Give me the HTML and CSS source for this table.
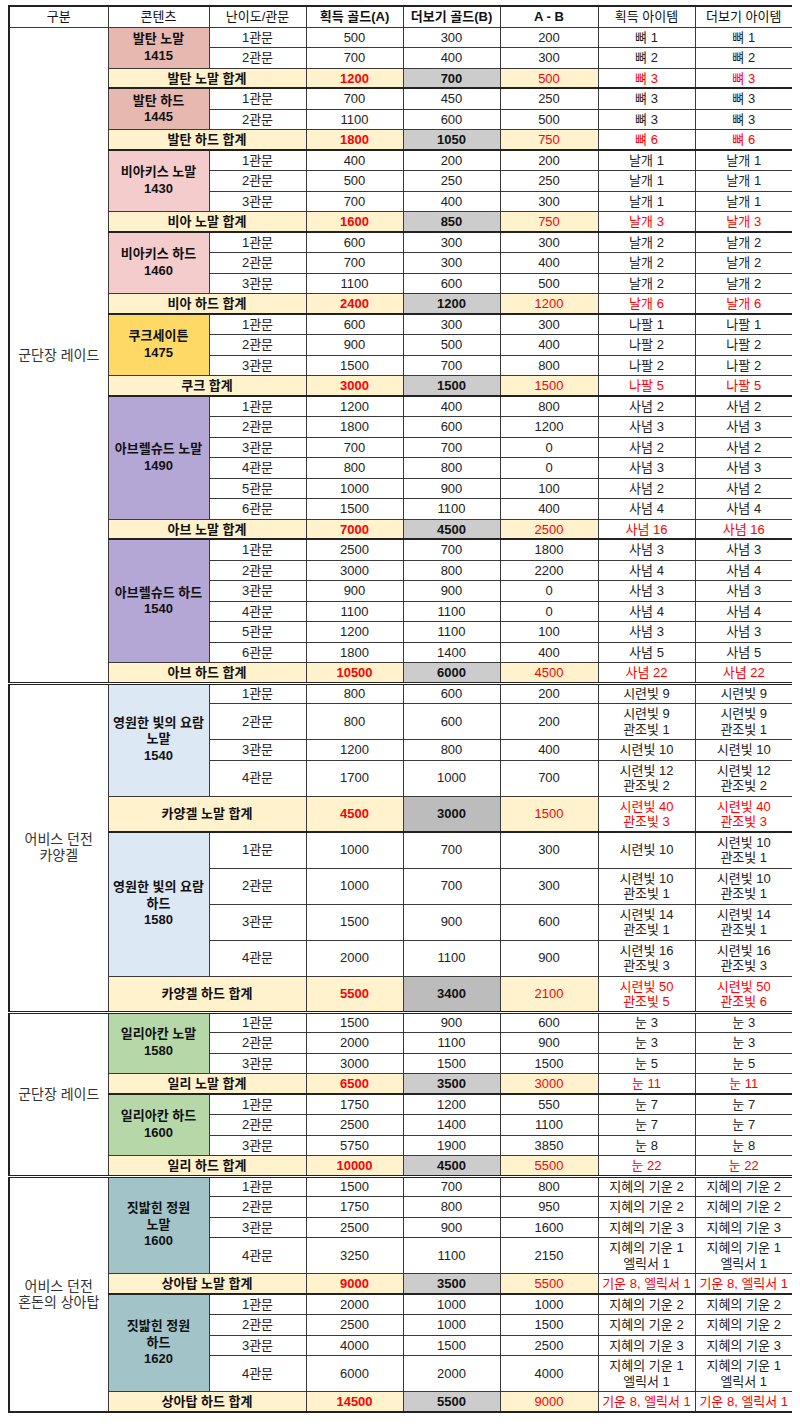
FILE: index.html
```html
<!DOCTYPE html>
<html lang="ko">
<head>
<meta charset="utf-8">
<title>골드 표</title>
<link rel="stylesheet" href="styles.css">
</head>
<body>
<table class="sheet">
<colgroup>
<col class="w99"><col class="w101"><col class="w97"><col class="w97"><col class="w97"><col class="w98"><col class="w97"><col class="w98">
</colgroup>
<thead>
<tr>
<th>구분</th><th>콘텐츠</th><th>난이도/관문</th><th class="b">획득 골드(A)</th><th class="b">더보기 골드(B)</th><th class="b">A - B</th><th>획득 아이템</th><th>더보기 아이템</th>
</tr>
</thead>
<tbody>
<!-- 군단장 레이드 -->
<tr>
<td class="cat" rowspan="32">군단장 레이드</td>
<td class="name valtan" rowspan="2">발탄 노말<br>1415</td>
<td>1관문</td><td>500</td><td>300</td><td>200</td><td>뼈 1</td><td>뼈 1</td></tr>
<tr><td>2관문</td><td>700</td><td>400</td><td>300</td><td>뼈 2</td><td>뼈 2</td></tr>
<tr class="sum"><td class="sum-label" colspan="2">발탄 노말 합계</td><td class="sa">1200</td><td class="sb">700</td><td class="sab">500</td><td class="si">뼈 3</td><td class="si">뼈 3</td></tr>

<tr><td class="name valtan" rowspan="2">발탄 하드<br>1445</td>
<td>1관문</td><td>700</td><td>450</td><td>250</td><td>뼈 3</td><td>뼈 3</td></tr>
<tr><td>2관문</td><td>1100</td><td>600</td><td>500</td><td>뼈 3</td><td>뼈 3</td></tr>
<tr class="sum"><td class="sum-label" colspan="2">발탄 하드 합계</td><td class="sa">1800</td><td class="sb">1050</td><td class="sab">750</td><td class="si">뼈 6</td><td class="si">뼈 6</td></tr>

<tr><td class="name biackiss" rowspan="3">비아키스 노말<br>1430</td>
<td>1관문</td><td>400</td><td>200</td><td>200</td><td>날개 1</td><td>날개 1</td></tr>
<tr><td>2관문</td><td>500</td><td>250</td><td>250</td><td>날개 1</td><td>날개 1</td></tr>
<tr><td>3관문</td><td>700</td><td>400</td><td>300</td><td>날개 1</td><td>날개 1</td></tr>
<tr class="sum"><td class="sum-label" colspan="2">비아 노말 합계</td><td class="sa">1600</td><td class="sb">850</td><td class="sab">750</td><td class="si">날개 3</td><td class="si">날개 3</td></tr>

<tr><td class="name biackiss" rowspan="3">비아키스 하드<br>1460</td>
<td>1관문</td><td>600</td><td>300</td><td>300</td><td>날개 2</td><td>날개 2</td></tr>
<tr><td>2관문</td><td>700</td><td>300</td><td>400</td><td>날개 2</td><td>날개 2</td></tr>
<tr><td>3관문</td><td>1100</td><td>600</td><td>500</td><td>날개 2</td><td>날개 2</td></tr>
<tr class="sum"><td class="sum-label" colspan="2">비아 하드 합계</td><td class="sa">2400</td><td class="sb">1200</td><td class="sab">1200</td><td class="si">날개 6</td><td class="si">날개 6</td></tr>

<tr><td class="name kouku" rowspan="3">쿠크세이튼<br>1475</td>
<td>1관문</td><td>600</td><td>300</td><td>300</td><td>나팔 1</td><td>나팔 1</td></tr>
<tr><td>2관문</td><td>900</td><td>500</td><td>400</td><td>나팔 2</td><td>나팔 2</td></tr>
<tr><td>3관문</td><td>1500</td><td>700</td><td>800</td><td>나팔 2</td><td>나팔 2</td></tr>
<tr class="sum"><td class="sum-label" colspan="2">쿠크 합계</td><td class="sa">3000</td><td class="sb">1500</td><td class="sab">1500</td><td class="si">나팔 5</td><td class="si">나팔 5</td></tr>

<tr><td class="name abrel" rowspan="6">아브렐슈드 노말<br>1490</td>
<td>1관문</td><td>1200</td><td>400</td><td>800</td><td>사념 2</td><td>사념 2</td></tr>
<tr><td>2관문</td><td>1800</td><td>600</td><td>1200</td><td>사념 3</td><td>사념 3</td></tr>
<tr><td>3관문</td><td>700</td><td>700</td><td>0</td><td>사념 2</td><td>사념 2</td></tr>
<tr><td>4관문</td><td>800</td><td>800</td><td>0</td><td>사념 3</td><td>사념 3</td></tr>
<tr><td>5관문</td><td>1000</td><td>900</td><td>100</td><td>사념 2</td><td>사념 2</td></tr>
<tr><td>6관문</td><td>1500</td><td>1100</td><td>400</td><td>사념 4</td><td>사념 4</td></tr>
<tr class="sum"><td class="sum-label" colspan="2">아브 노말 합계</td><td class="sa">7000</td><td class="sb">4500</td><td class="sab">2500</td><td class="si">사념 16</td><td class="si">사념 16</td></tr>

<tr><td class="name abrel" rowspan="6">아브렐슈드 하드<br>1540</td>
<td>1관문</td><td>2500</td><td>700</td><td>1800</td><td>사념 3</td><td>사념 3</td></tr>
<tr><td>2관문</td><td>3000</td><td>800</td><td>2200</td><td>사념 4</td><td>사념 4</td></tr>
<tr><td>3관문</td><td>900</td><td>900</td><td>0</td><td>사념 3</td><td>사념 3</td></tr>
<tr><td>4관문</td><td>1100</td><td>1100</td><td>0</td><td>사념 4</td><td>사념 4</td></tr>
<tr><td>5관문</td><td>1200</td><td>1100</td><td>100</td><td>사념 3</td><td>사념 3</td></tr>
<tr><td>6관문</td><td>1800</td><td>1400</td><td>400</td><td>사념 5</td><td>사념 5</td></tr>
<tr class="sum"><td class="sum-label" colspan="2">아브 하드 합계</td><td class="sa">10500</td><td class="sb">6000</td><td class="sab">4500</td><td class="si">사념 22</td><td class="si">사념 22</td></tr>

<!-- 어비스 던전 카양겔 -->
<tr class="sec">
<td class="cat" rowspan="10">어비스 던전<br>카양겔</td>
<td class="name kayangel" rowspan="4">영원한 빛의 요람<br>노말<br>1540</td>
<td>1관문</td><td>800</td><td>600</td><td>200</td><td>시련빛 9</td><td>시련빛 9</td></tr>
<tr><td>2관문</td><td>800</td><td>600</td><td>200</td><td>시련빛 9<br>관조빛 1</td><td>시련빛 9<br>관조빛 1</td></tr>
<tr><td>3관문</td><td>1200</td><td>800</td><td>400</td><td>시련빛 10</td><td>시련빛 10</td></tr>
<tr><td>4관문</td><td>1700</td><td>1000</td><td>700</td><td>시련빛 12<br>관조빛 2</td><td>시련빛 12<br>관조빛 2</td></tr>
<tr class="sum"><td class="sum-label" colspan="2">카양겔 노말 합계</td><td class="sa">4500</td><td class="sb dark">3000</td><td class="sab">1500</td><td class="si">시련빛 40<br>관조빛 3</td><td class="si">시련빛 40<br>관조빛 3</td></tr>

<tr><td class="name kayangel" rowspan="4">영원한 빛의 요람<br>하드<br>1580</td>
<td>1관문</td><td>1000</td><td>700</td><td>300</td><td>시련빛 10</td><td>시련빛 10<br>관조빛 1</td></tr>
<tr><td>2관문</td><td>1000</td><td>700</td><td>300</td><td>시련빛 10<br>관조빛 1</td><td>시련빛 10<br>관조빛 1</td></tr>
<tr><td>3관문</td><td>1500</td><td>900</td><td>600</td><td>시련빛 14<br>관조빛 1</td><td>시련빛 14<br>관조빛 1</td></tr>
<tr><td>4관문</td><td>2000</td><td>1100</td><td>900</td><td>시련빛 16<br>관조빛 3</td><td>시련빛 16<br>관조빛 3</td></tr>
<tr class="sum"><td class="sum-label" colspan="2">카양겔 하드 합계</td><td class="sa">5500</td><td class="sb dark">3400</td><td class="sab">2100</td><td class="si">시련빛 50<br>관조빛 5</td><td class="si">시련빛 50<br>관조빛 6</td></tr>

<!-- 군단장 레이드 (일리아칸) -->
<tr class="sec">
<td class="cat" rowspan="8">군단장 레이드</td>
<td class="name illiakan" rowspan="3">일리아칸 노말<br>1580</td>
<td>1관문</td><td>1500</td><td>900</td><td>600</td><td>눈 3</td><td>눈 3</td></tr>
<tr><td>2관문</td><td>2000</td><td>1100</td><td>900</td><td>눈 3</td><td>눈 3</td></tr>
<tr><td>3관문</td><td>3000</td><td>1500</td><td>1500</td><td>눈 5</td><td>눈 5</td></tr>
<tr class="sum"><td class="sum-label" colspan="2">일리 노말 합계</td><td class="sa">6500</td><td class="sb">3500</td><td class="sab">3000</td><td class="si">눈 11</td><td class="si">눈 11</td></tr>

<tr><td class="name illiakan" rowspan="3">일리아칸 하드<br>1600</td>
<td>1관문</td><td>1750</td><td>1200</td><td>550</td><td>눈 7</td><td>눈 7</td></tr>
<tr><td>2관문</td><td>2500</td><td>1400</td><td>1100</td><td>눈 7</td><td>눈 7</td></tr>
<tr><td>3관문</td><td>5750</td><td>1900</td><td>3850</td><td>눈 8</td><td>눈 8</td></tr>
<tr class="sum"><td class="sum-label" colspan="2">일리 하드 합계</td><td class="sa">10000</td><td class="sb">4500</td><td class="sab">5500</td><td class="si">눈 22</td><td class="si">눈 22</td></tr>

<!-- 어비스 던전 혼돈의 상아탑 -->
<tr class="sec">
<td class="cat" rowspan="10">어비스 던전<br>혼돈의 상아탑</td>
<td class="name ivory" rowspan="4">짓밟힌 정원<br>노말<br>1600</td>
<td>1관문</td><td>1500</td><td>700</td><td>800</td><td>지혜의 기운 2</td><td>지혜의 기운 2</td></tr>
<tr><td>2관문</td><td>1750</td><td>800</td><td>950</td><td>지혜의 기운 2</td><td>지혜의 기운 2</td></tr>
<tr><td>3관문</td><td>2500</td><td>900</td><td>1600</td><td>지혜의 기운 3</td><td>지혜의 기운 3</td></tr>
<tr><td>4관문</td><td>3250</td><td>1100</td><td>2150</td><td>지혜의 기운 1<br>엘릭서 1</td><td>지혜의 기운 1<br>엘릭서 1</td></tr>
<tr class="sum"><td class="sum-label" colspan="2">상아탑 노말 합계</td><td class="sa">9000</td><td class="sb">3500</td><td class="sab">5500</td><td class="si">기운 8, 엘릭서 1</td><td class="si">기운 8, 엘릭서 1</td></tr>

<tr><td class="name ivory" rowspan="4">짓밟힌 정원<br>하드<br>1620</td>
<td>1관문</td><td>2000</td><td>1000</td><td>1000</td><td>지혜의 기운 2</td><td>지혜의 기운 2</td></tr>
<tr><td>2관문</td><td>2500</td><td>1000</td><td>1500</td><td>지혜의 기운 2</td><td>지혜의 기운 2</td></tr>
<tr><td>3관문</td><td>4000</td><td>1500</td><td>2500</td><td>지혜의 기운 3</td><td>지혜의 기운 3</td></tr>
<tr><td>4관문</td><td>6000</td><td>2000</td><td>4000</td><td>지혜의 기운 1<br>엘릭서 1</td><td>지혜의 기운 1<br>엘릭서 1</td></tr>
<tr class="sum last"><td class="sum-label" colspan="2">상아탑 하드 합계</td><td class="sa">14500</td><td class="sb">5500</td><td class="sab">9000</td><td class="si">기운 8, 엘릭서 1</td><td class="si">기운 8, 엘릭서 1</td></tr>
</tbody>
</table>
</body>
</html>
```

FILE: styles.css
```css
html, body {
  background: #ffffff;
}

body {
  margin: 5px 8px;
  font-family: "Liberation Sans", "Noto Sans CJK KR", Arial, sans-serif;
  font-size: 13px;
  color: #222222;
}

.sheet {
  border-collapse: collapse;
  table-layout: fixed;
  width: 784px;
  border: 2px solid #222222;
}

.w99 { width: 99px; }
.w101 { width: 101px; }
.w97 { width: 97px; }
.w98 { width: 98px; }

.sheet th,
.sheet td {
  border: 1px solid #3a3a3a;
  padding: 2px 1px;
  line-height: 15.5px;
  text-align: center;
  vertical-align: middle;
  white-space: nowrap;
  font-weight: normal;
  overflow: hidden;
}

.sheet th {
  color: #111111;
  background: #ffffff;
}

.sheet th.b {
  font-weight: bold;
}

.sheet td.cat {
  color: #333333;
  font-size: 14px;
  line-height: 16px;
}

.sheet td.name {
  font-weight: bold;
  color: #111111;
  line-height: 16.5px;
}

.valtan { background: #e6b8af; }
.biackiss { background: #f4cccc; }
.kouku { background: #ffd966; }
.abrel { background: #b4a7d6; }
.kayangel { background: #dde8f5; }
.illiakan { background: #b6d7a8; }
.ivory { background: #a2c4c9; }

.sheet tr.sum td {
  border-bottom: 2px solid #222222;
  padding-bottom: 1px;
}

.sheet tr.sec td {
  border-top: 3px double #222222;
  padding-top: 1px;
}

.sheet td.sum-label {
  background: #fff2cc;
  font-weight: bold;
  color: #111111;
}

.sheet td.sa {
  background: #fff2cc;
  color: #ff0000;
  font-weight: bold;
}

.sheet td.sb {
  background: #cccccc;
  color: #111111;
  font-weight: bold;
}

.sheet td.sb.dark {
  background: #bcbcbc;
}

.sheet td.sab {
  background: #fff2cc;
  color: #ff0000;
}

.sheet td.si {
  color: #ff0000;
  padding-left: 0;
  padding-right: 0;
}
```
